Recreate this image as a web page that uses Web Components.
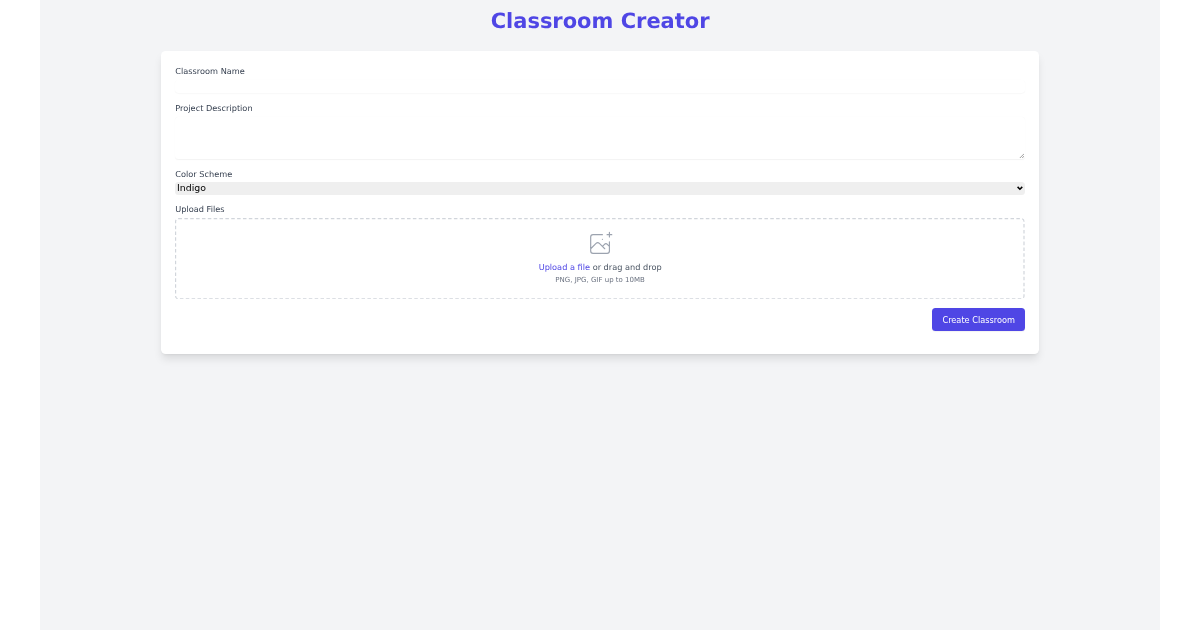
<!DOCTYPE html>
<html>
<head>
<meta charset="utf-8">
<title>Classroom Creator</title>
<style>
html,body{margin:0;padding:0;background:#fff;height:100%;overflow:hidden}
body{font-family:"DejaVu Sans",sans-serif}
</style>
</head>
<body>
<classroom-page></classroom-page>

<script>
//Page shell: grey column, title, white card. Sizes are for a 2048 wide page, zoomed down to the window
class ClassroomPage extends HTMLElement{
    constructor(){
        super()
        this.attachShadow({mode:"open"})
        this.shadowRoot.innerHTML=`
        <style>
        :host{display:block;zoom:.5859;width:1912px;height:1075px;margin:0 auto;background:#f3f4f6;box-sizing:border-box;padding-top:17.5px;
            text-rendering:geometricPrecision;will-change:transform}
        h1{margin:0 0 29.5px;font-size:35.8px;line-height:40px;font-weight:700;text-align:center;color:#4f46e5}
        .card{width:1498px;height:517px;margin:0 auto;box-sizing:border-box;padding:25.5px 24px 24px;background:#fff;border-radius:8px;
            box-shadow:0 10px 15px -3px rgba(0,0,0,.1),0 4px 6px -4px rgba(0,0,0,.1)}
        .footer{display:flex;justify-content:flex-end;margin-top:14.5px}
        </style>
        <h1>Classroom Creator</h1>
        <div class="card">
            <classroom-field label="Classroom Name" gap="18"><classroom-input></classroom-input></classroom-field>
            <classroom-field label="Project Description" gap="17.5"><classroom-textarea></classroom-textarea></classroom-field>
            <classroom-field label="Color Scheme" gap="16" tight><classroom-select></classroom-select></classroom-field>
            <classroom-field label="Upload Files" snug><classroom-dropzone></classroom-dropzone></classroom-field>
            <div class="footer"><classroom-button>Create Classroom</classroom-button></div>
        </div>`
    }
}

class ClassroomField extends HTMLElement{
    constructor(){
        super()
        this.attachShadow({mode:"open"})
        this.shadowRoot.innerHTML=`
        <style>
        :host{display:block}
        label{display:block;font-size:14px;line-height:20px;color:#374151;margin-bottom:4px}
        :host([tight]) label{margin-bottom:2.5px}
        :host([snug]) label{margin-bottom:3px}
        </style>
        <label></label>
        <slot></slot>`
    }
    connectedCallback(){
        this.shadowRoot.querySelector('label').textContent=this.getAttribute('label')
        this.style.marginBottom=(this.getAttribute('gap')||0)+'px'
    }
}

class ClassroomInput extends HTMLElement{
    constructor(){
        super()
        this.attachShadow({mode:"open"})
        this.shadowRoot.innerHTML=`
        <style>
        :host{display:block}
        input{display:block;width:100%;height:22px;box-sizing:border-box;border:0;padding:0 8px;margin:0;background:#fff;border-radius:6px;
            outline:0;box-shadow:0 1px 2px rgba(0,0,0,.05)}
        </style>
        <input type="text">`
    }
}

class ClassroomTextarea extends HTMLElement{
    constructor(){
        super()
        this.attachShadow({mode:"open"})
        this.shadowRoot.innerHTML=`
        <style>
        :host{display:block;position:relative}
        textarea{display:block;width:100%;height:70.5px;box-sizing:border-box;border:0;padding:4px 8px;margin:0;background:#fff;border-radius:6px;
            outline:0;box-shadow:0 1px 2px rgba(0,0,0,.05);resize:none}
        svg{position:absolute;right:1px;bottom:1px;width:9px;height:9px}
        </style>
        <textarea></textarea>
        <svg viewBox="0 0 9 9" fill="none" stroke="#6b6b6b" stroke-width="1.1"><path d="M1 9L9 1M5 9L9 5"></path></svg>`
    }
}

class ClassroomSelect extends HTMLElement{
    constructor(){
        super()
        this.attachShadow({mode:"open"})
        this.shadowRoot.innerHTML=`
        <style>
        :host{display:block;position:relative}
        select{display:block;width:100%;height:22px;box-sizing:border-box;border:0;padding:0 0 2px 3px;margin:0;outline:0;border-radius:6px;appearance:none;
            font-family:"DejaVu Sans",sans-serif;font-size:16px;color:#000;background-color:#efefef}
        svg{position:absolute;right:3.5px;top:6.5px;width:10px;height:8px;pointer-events:none}
        </style>
        <select><option>Indigo</option><option>Blue</option><option>Green</option></select>
        <svg viewBox="0 0 10 8" fill="none" stroke="#000" stroke-width="2.6"><path d="M1 1.5L5 5.5L9 1.5"></path></svg>`
    }
}

class ClassroomDropzone extends HTMLElement{
    constructor(){
        super()
        this.attachShadow({mode:"open"})
        this.shadowRoot.innerHTML=`
        <style>
        :host{display:flex;flex-direction:column;align-items:center;position:relative;box-sizing:border-box;height:139px;padding-top:21px}
        .dash{position:absolute;left:0;top:0;width:100%;height:100%;color:#d1d5db}
        .dash rect{x:1px;y:1px;width:calc(100% - 2px);height:calc(100% - 2px);rx:5px;fill:none;stroke:currentColor;stroke-width:2;stroke-dasharray:6 4}
        .icon{display:block;width:48px;height:48px;color:#9ca3af}
        .main{font-size:14px;line-height:20px;color:#4b5563;margin-top:6px}
        .main span{color:#4f46e5}
        .hint{font-size:12px;line-height:16px;color:#6b7280;margin-top:2.5px}
        </style>
        <svg class="dash"><rect></rect></svg>
        <svg class="icon" viewBox="0 0 48 48" fill="none" stroke="currentColor" stroke-width="2" stroke-linecap="round" stroke-linejoin="round">
            <path d="M28 8H12a4 4 0 00-4 4v20m32-12v8m0 0v8a4 4 0 01-4 4H12a4 4 0 01-4-4v-4m32-4l-3.172-3.172a4 4 0 00-5.656 0L28 28M8 32l9.172-9.172a4 4 0 015.656 0L28 28m0 0l4 4m4-24h8m-4-4v8m-12 4h.02"></path>
        </svg>
        <div class="main"><span>Upload a file</span> or drag and drop</div>
        <div class="hint">PNG, JPG, GIF up to 10MB</div>`
    }
}

class ClassroomButton extends HTMLElement{
    constructor(){
        super()
        this.attachShadow({mode:"open"})
        this.shadowRoot.innerHTML=`
        <style>
        :host{display:inline-block}
        button{display:block;box-sizing:border-box;border:0;padding:12px 17px 7px;border-radius:6px;background:#4f46e5;color:#fff;
            font-family:"DejaVu Sans",sans-serif;font-size:14px;line-height:20px;box-shadow:0 1px 2px rgba(0,0,0,.05)}
        </style>
        <button><slot></slot></button>`
    }
}

window.customElements.define('classroom-page',ClassroomPage)
window.customElements.define('classroom-field',ClassroomField)
window.customElements.define('classroom-input',ClassroomInput)
window.customElements.define('classroom-textarea',ClassroomTextarea)
window.customElements.define('classroom-select',ClassroomSelect)
window.customElements.define('classroom-dropzone',ClassroomDropzone)
window.customElements.define('classroom-button',ClassroomButton)
</script>
</body>
</html>
